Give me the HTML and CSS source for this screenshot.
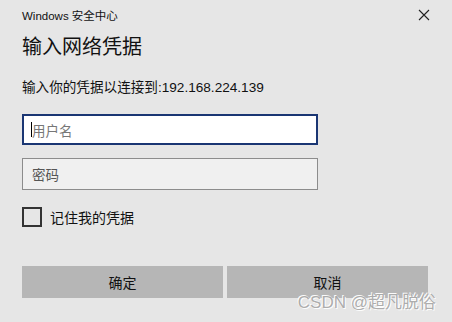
FILE: index.html
```html
<!DOCTYPE html>
<html lang="zh-CN">
<head>
<meta charset="utf-8">
<link rel="stylesheet" href="styles.css">
</head>
<body>
<div class="dialog">
  <div class="topbar">
    <span class="app">Windows 安全中心</span>
    <svg class="close" width="12" height="12" viewBox="0 0 12 12"><path d="M1 1 L11 11 M11 1 L1 11" stroke="#222" stroke-width="1.1" fill="none"/></svg>
  </div>
  <h1 class="title">输入网络凭据</h1>
  <p class="desc">输入你的凭据以连接到:192.168.224.139</p>
  <div class="field field-active"><span class="caret"></span><span class="ph">用户名</span></div>
  <div class="field field-pass"><span class="ph">密码</span></div>
  <label class="remember"><span class="box"></span><span>记住我的凭据</span></label>
  <div class="buttons">
    <div class="btn">确定</div>
    <div class="btn">取消</div>
  </div>
  <div class="watermark">CSDN @超凡脱俗</div>
</div>
</body>
</html>
```

FILE: styles.css
```css
html, body {
  margin: 0;
  padding: 0;
  background: #e6e6e6;
  width: 452px;
  height: 322px;
  overflow: hidden;
}
.dialog {
  position: relative;
  width: 452px;
  height: 322px;
  box-sizing: border-box;
  padding: 0 24px 0 22px;
  font-family: "Microsoft YaHei", "Noto Sans CJK SC", "Liberation Sans", sans-serif;
  color: #000;
}
.topbar {
  display: flex;
  justify-content: space-between;
  align-items: center;
  height: 30px;
}
.app {
  font-size: 11.5px;
  color: #111;
  font-family: "Liberation Sans", "Noto Sans CJK SC", sans-serif;
}
.close {
  margin-right: -2px;
}
.title {
  margin: 2px 0 0 0;
  font-size: 20px;
  font-weight: normal;
  line-height: 28px;
  color: #111;
}
.desc {
  margin: 19px 0 0 0;
  font-size: 13.6px;
  line-height: 18px;
  color: #111;
  font-family: "Liberation Sans", "Noto Sans CJK SC", sans-serif;
}
.field {
  width: 296px;
  height: 31px;
  box-sizing: border-box;
  display: flex;
  align-items: center;
  padding-left: 9px;
  font-size: 13.5px;
  color: #777;
}
.field-active {
  margin-top: 17px;
  border: 2px solid #1a3673;
  background: #fff;
  padding-left: 7px;
}
.caret {
  width: 1px;
  height: 15px;
  background: #000;
}
.field-pass {
  margin-top: 13px;
  height: 32px;
  border: 1px solid #8c8c8c;
  background: #f0f0f0;
  color: #555;
}
.remember {
  display: flex;
  align-items: center;
  gap: 8px;
  margin-top: 17px;
  font-size: 14px;
  color: #111;
}
.box {
  width: 20px;
  height: 20px;
  box-sizing: border-box;
  border: 2px solid #333;
}
.buttons {
  display: flex;
  gap: 4px;
  margin-top: 39px;
  width: 406px;
}
.btn {
  flex: 1;
  height: 32px;
  background: #b6b6b6;
  display: flex;
  align-items: center;
  justify-content: center;
  font-size: 14px;
  color: #111;
}
.watermark {
  position: absolute;
  right: 16px;
  bottom: 9px;
  font-size: 17px;
  color: #aaa;
  font-family: "Liberation Sans", "Noto Sans CJK SC", sans-serif;
  text-shadow: 0 0 1px #fff, 1px 1px 0 #fff, -1px -1px 0 #fff;
  opacity: 0.95;
}
```
